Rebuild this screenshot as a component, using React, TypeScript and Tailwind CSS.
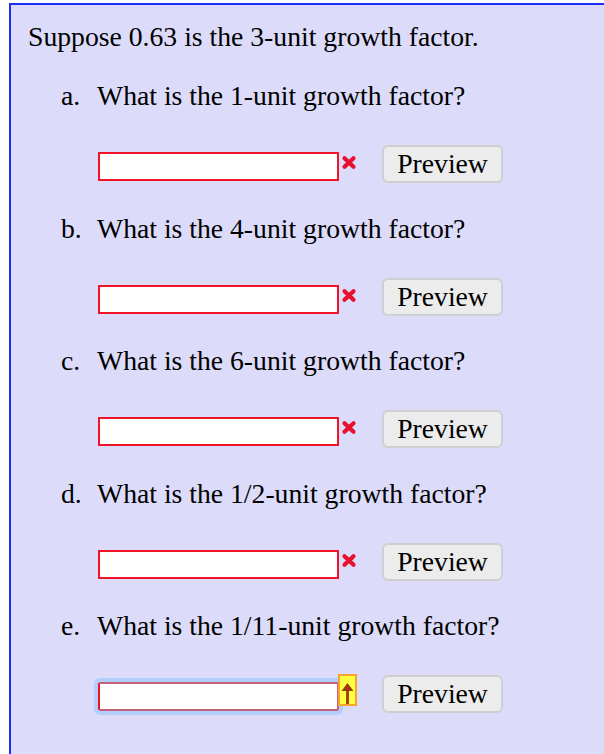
import React from "react";

const questions = [
  { label: "a.", text: "What is the 1-unit growth factor?" },
  { label: "b.", text: "What is the 4-unit growth factor?" },
  { label: "c.", text: "What is the 6-unit growth factor?" },
  { label: "d.", text: "What is the 1/2-unit growth factor?" },
  { label: "e.", text: "What is the 1/11-unit growth factor?", focused: true },
];

// red cross shown next to an empty answer
const WrongMark = () => (
  <svg width="16" height="15" viewBox="0 0 16 15" className="mt-[10px] ml-[2px]">
    <path d="M3.5 3.2 L12.5 11.8 M12.5 3.2 L3.5 11.8" stroke="#e8102e" strokeWidth="4.2" strokeLinecap="round" />
  </svg>
);

// yellow hint box with an up arrow
const HintMark = () => (
  <div className="relative -ml-[1px] mt-[-1px] h-[32px] w-[19px] border-2 border-[#f7a52a] bg-[#ffff44]">
    <svg width="15" height="28" viewBox="0 0 15 28" className="absolute left-0 top-0">
      <path d="M1.5 15 L7.5 7 L13.5 15 Z" fill="#9c3a0a" />
      <rect x="6.1" y="13" width="2.8" height="15" fill="#9c3a0a" />
    </svg>
  </div>
);

export default function App() {
  return (
    <div className="min-h-[754px] overflow-hidden bg-white pt-[3px] pl-[9px] font-['Liberation_Serif',serif] text-[27.7px] text-black">
      <div className="min-h-[751px] w-[620px] border-t-2 border-l-2 border-[#1a30f5] bg-[#dcdcfa] pt-4 pl-[17px]">
        <p className="leading-[32px]">Suppose 0.63 is the 3-unit growth factor.</p>

        <div className="mt-[27px] pl-[33px]">
          {questions.map((q) => (
            <div key={q.label} className="mb-[29.5px]">
              <div className="flex leading-[32px]">
                <span className="w-[36px]">{q.label}</span>
                <span>{q.text}</span>
              </div>
              <div className="mt-[33px] flex items-start pl-[37px]">
                {q.focused ? (
                  <input
                    className="mt-[7px] h-[29px] w-[241px] rounded-[2px] border-2 border-[#c4607c] border-l-[#f01428] bg-white outline outline-[4px] outline-[#b0d0fb]"
                    type="text"
                  />
                ) : (
                  <input
                    className="mt-[7px] h-[29px] w-[241px] border-2 border-[#f01428] bg-white outline-none"
                    type="text"
                  />
                )}
                {q.focused ? <HintMark /> : <WrongMark />}
                <button className="ml-[25px] h-[38px] w-[121px] rounded-[6px] border-2 border-[#cfcfcf] bg-[#ececec] leading-none">
                  Preview
                </button>
              </div>
            </div>
          ))}
        </div>
      </div>
    </div>
  );
}
